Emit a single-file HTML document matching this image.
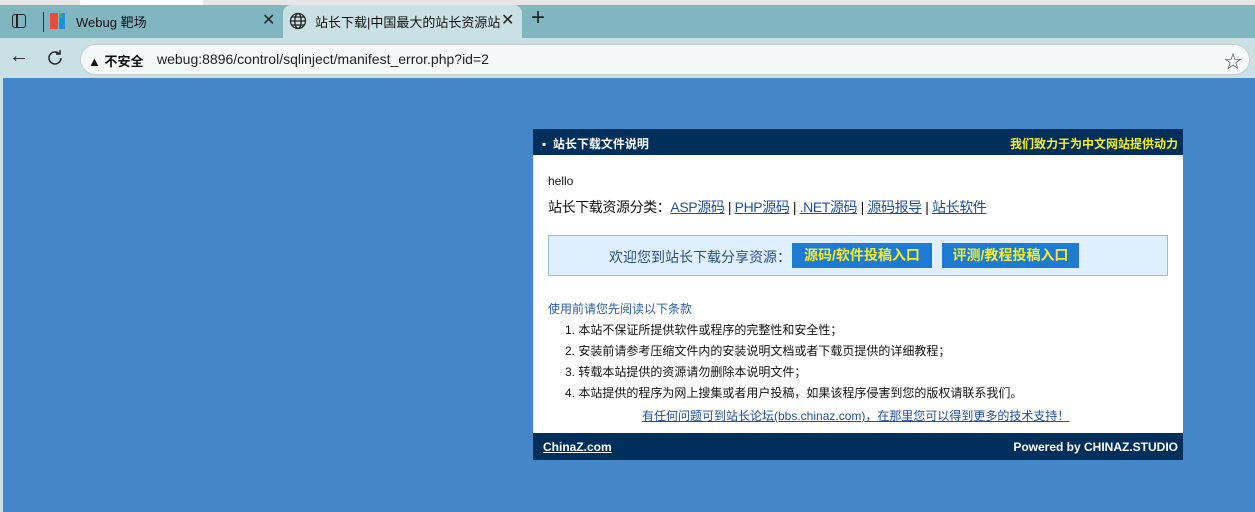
<!DOCTYPE html>
<html><head><meta charset="utf-8"><style>
*{margin:0;padding:0;box-sizing:border-box}
body{width:1255px;height:512px;overflow:hidden;background:#c9e0e5;font-family:"Liberation Sans","Noto Sans CJK SC",sans-serif;position:relative}
.abs{position:absolute;white-space:nowrap}
a{color:#1f4e9c}
</style></head><body>
<div class="abs" style="left:0;top:0;width:1255px;height:5px;background:#e6e6e6"></div>
<div class="abs" style="top:0;width:123px;height:5px;background:#fff;left:80px"></div>
<div class="abs" style="left:0;top:5px;width:1255px;height:33px;background:#7fb6bf"></div>
<div class="abs" style="left:12px;top:14px;width:14px;height:14px;border:1.5px solid #222;border-radius:3px"></div>
<div class="abs" style="left:16px;top:15px;width:1.5px;height:12px;background:#222"></div>
<div class="abs" style="left:43px;top:12px;width:1px;height:20px;background:#333"></div>
<div class="abs" style="left:50px;top:13px;width:8px;height:16px;background:#e84c3d"></div>
<div class="abs" style="left:59px;top:13px;width:6px;height:16px;background:#1e90d8"></div>
<div class="abs" style="left:59px;top:13px;width:3px;height:5px;background:#4caf50"></div>
<div class="abs" style="left:76px;top:12px;font-size:13px;color:#111">Webug 靶场</div>
<div class="abs" style="left:262px;top:10px;font-size:16px;color:#222">✕</div>
<div class="abs" style="left:283px;top:5px;width:239px;height:33px;background:#c9e0e5;border-radius:8px 8px 0 0"></div>
<svg class="abs" style="left:289px;top:12px" width="18" height="18" viewBox="0 0 18 18" fill="none" stroke="#222" stroke-width="1.3"><circle cx="9" cy="9" r="7.5"/><ellipse cx="9" cy="9" rx="3.2" ry="7.5"/><path d="M1.5 9h15M3 5h12M3 13h12"/></svg>
<div class="abs" style="left:315px;top:12px;font-size:13px;color:#111">站长下载|中国最大的站长资源站</div>
<div class="abs" style="left:501px;top:10px;font-size:16px;color:#222">✕</div>
<div class="abs" style="left:531px;top:4px;font-size:24px;color:#222;font-weight:300">+</div>
<div class="abs" style="left:9px;top:45px;font-size:20px;color:#222">←</div>
<svg class="abs" style="left:45px;top:48px" width="20" height="20" viewBox="0 0 20 20" fill="none" stroke="#222" stroke-width="1.5"><path d="M16 10a6 6 0 1 1-2-4.5"/><path d="M15 2v4h-4"/></svg>
<div class="abs" style="left:80px;top:44px;width:1170px;height:31px;background:#f5f8f9;border:1px solid #c8cccd;border-radius:16px"></div>
<div class="abs" style="left:88px;top:51px;font-size:13px;color:#111">▲ <b style="font-weight:600">不安全</b></div>
<div class="abs" style="left:157px;top:51px;font-size:14px;color:#222">webug:8896/control/sqlinject/manifest_error.php?id=2</div>
<div class="abs" style="left:1224px;top:48px;font-size:18px;color:#555">☆</div>
<div class="abs" style="left:3px;top:78px;width:1252px;height:434px;background:#4387c8"></div>
<div class="abs" style="left:533px;top:129px;width:650px;height:331px;background:#fff">
 <div style="height:26px;background:#002f5c;color:#fff;font-size:12px;font-weight:bold;padding:6px 9px;position:relative">▪&nbsp; 站长下载文件说明<span style="position:absolute;right:5px;top:6px;color:#f4ee2a">我们致力于为中文网站提供动力</span></div>
 <div class="abs" style="left:15px;top:45px;font-size:12px;color:#111">hello</div>
 <div class="abs" style="left:15px;top:68px;font-size:14px;color:#111;letter-spacing:-0.4px">站长下载资源分类：<a href="#">ASP源码</a> | <a href="#">PHP源码</a> | <a href="#">.NET源码</a> | <a href="#">源码报导</a> | <a href="#">站长软件</a></div>
 <div class="abs" style="left:15px;top:106px;width:620px;height:41px;background:#e0effd;border:1px solid #96bde0"></div>
 <div class="abs" style="left:76px;top:118px;font-size:14px;color:#2a4f8a">欢迎您到站长下载分享资源：</div>
 <div class="abs" style="left:259px;top:114px;width:140px;height:25px;background:#1e7bd4;color:#f4ee2a;font-size:14px;font-weight:bold;text-align:center;line-height:25px">源码/软件投稿入口</div>
 <div class="abs" style="left:409px;top:114px;width:137px;height:25px;background:#1e7bd4;color:#f4ee2a;font-size:14px;font-weight:bold;text-align:center;line-height:25px">评测/教程投稿入口</div>
 <div class="abs" style="left:15px;top:171px;font-size:12px;color:#2a5ca8">使用前请您先阅读以下条款</div>
 <div class="abs" style="left:32px;top:191px;font-size:12px;color:#111;line-height:21px">1. 本站不保证所提供软件或程序的完整性和安全性；<br>2. 安装前请参考压缩文件内的安装说明文档或者下载页提供的详细教程；<br>3. 转载本站提供的资源请勿删除本说明文件；<br>4. 本站提供的程序为网上搜集或者用户投稿，如果该程序侵害到您的版权请联系我们。</div>
 <div class="abs" style="left:109px;top:278px;font-size:12px"><a href="#">有任何问题可到站长论坛(bbs.chinaz.com)，在那里您可以得到更多的技术支持！</a></div>
 <div class="abs" style="left:0;top:304px;width:650px;height:27px;background:#002f5c;color:#fff;font-size:12px;font-weight:bold;padding:7px 10px"><a href="#" style="color:#fff">ChinaZ.com</a><span style="position:absolute;right:5px;top:7px">Powered by CHINAZ.STUDIO</span></div>
</div>
</body></html>
